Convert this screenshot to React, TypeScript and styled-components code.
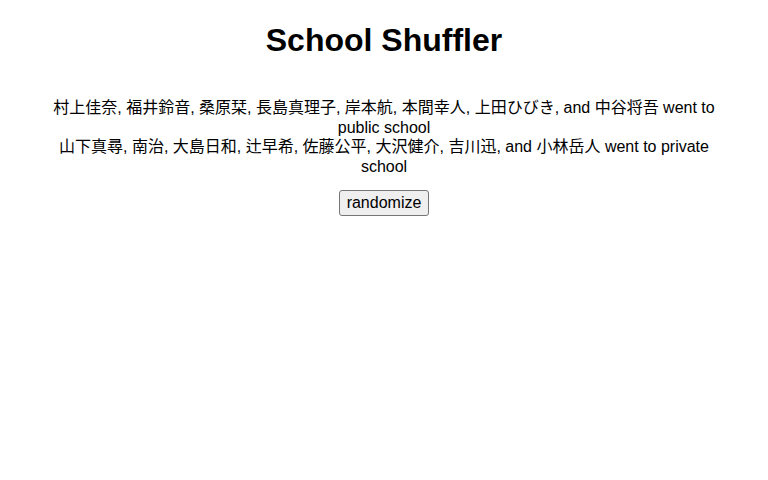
import React, { useState } from "react"
import styled, { createGlobalStyle } from "styled-components"

const students = [
  "村上佳奈",
  "福井鈴音",
  "桑原栞",
  "長島真理子",
  "岸本航",
  "本間幸人",
  "上田ひびき",
  "中谷将吾",
  "山下真尋",
  "南治",
  "大島日和",
  "辻早希",
  "佐藤公平",
  "大沢健介",
  "吉川迅",
  "小林岳人",
]

const joinNames = (names: string[]) =>
  names.slice(0, -1).join(", ") + ", and " + names[names.length - 1]

const shuffle = (list: string[]) => {
  const copy = [...list]
  for (let i = copy.length - 1; i > 0; i--) {
    const j = Math.floor(Math.random() * (i + 1))
    ;[copy[i], copy[j]] = [copy[j], copy[i]]
  }
  return copy
}

const App = () => {
  const [order, setOrder] = useState(students)
  const publicGroup = order.slice(0, 8)
  const privateGroup = order.slice(8)

  return (
    <>
      <GlobalStyle />
      <Page>
        <Title>School Shuffler</Title>
        <Results>
          <Group>{joinNames(publicGroup)} went to public school</Group>
          <Group>{joinNames(privateGroup)} went to private school</Group>
        </Results>
        <Controls>
          <Button onClick={() => setOrder(shuffle(students))}>randomize</Button>
        </Controls>
      </Page>
    </>
  )
}

export default App

const GlobalStyle = createGlobalStyle`
  body {
    margin: 8px;
    background: #fff;
    color: #000;
    font-family: "Liberation Sans", "Noto Sans CJK JP", sans-serif;
  }
`

const Page = styled.div`
  text-align: center;
`

const Title = styled.h1`
  font-size: 32px;
  font-weight: bold;
  margin: 14px 0 39px;
`

const Results = styled.div`
  max-width: 680px;
  margin: 0 auto;
  font-size: 16px;
  line-height: 19.7px;
`

const Group = styled.div``

const Controls = styled.p`
  margin: 13px 0;
`

const Button = styled.button`
  font-family: "Liberation Sans", sans-serif;
  font-size: 16px;
  line-height: 18px;
  color: #000;
  background: #efefef;
  border: 1px solid #767676;
  border-radius: 3px;
  padding: 3px 7px;
  cursor: pointer;
`
